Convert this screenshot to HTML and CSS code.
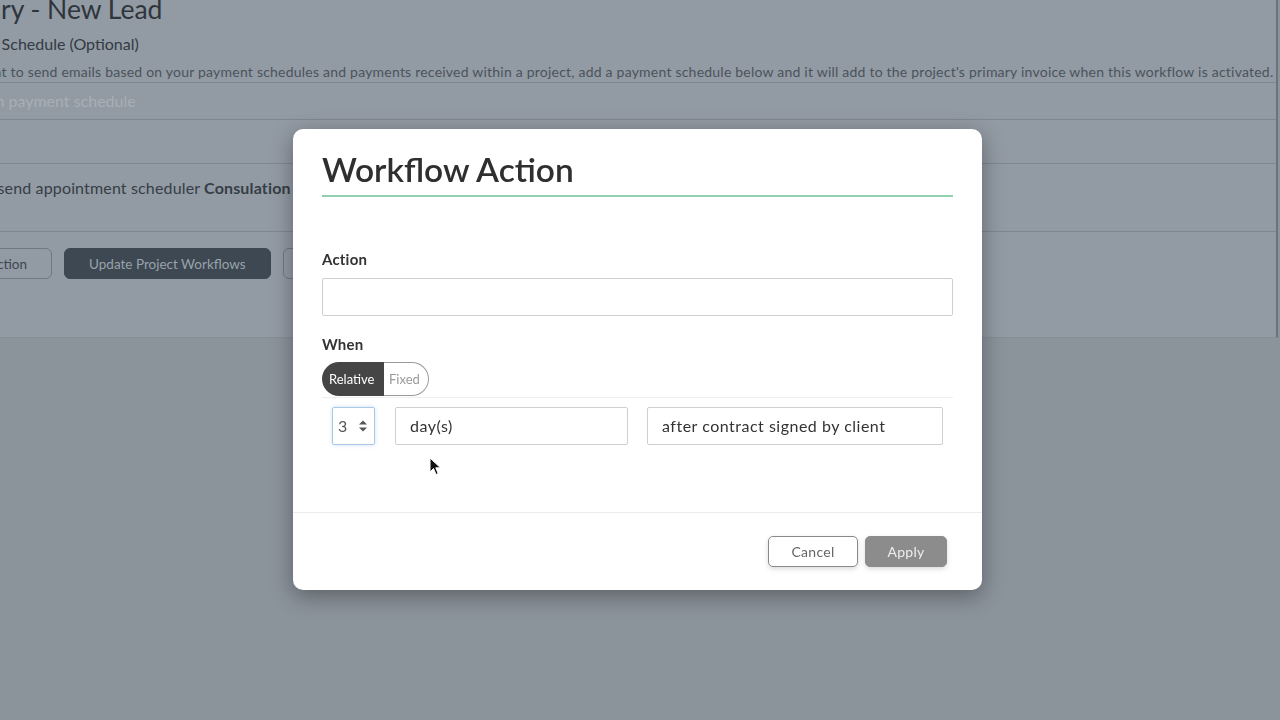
FILE: index.html
```html
<!DOCTYPE html>
<html lang="en">
<head>
    <meta charset="UTF-8">
    <meta name="viewport" content="width=device-width, initial-scale=1.0">
    <title>Workflow Action</title>
    <link rel="stylesheet" href="styles.css">
</head>
<body>
    <div class="page">
        <div class="card">
            <h1 class="page-title">Inquiry - New Lead</h1>
            <div class="schedule">
                <h2>Payment Schedule (Optional)</h2>
                <p class="hint">If you want to send emails based on your payment schedules and payments received within a project, add a payment schedule below and it will add to the project's primary invoice when this workflow is activated.</p>
                <div class="field">Add your own payment schedule</div>
            </div>
            <div class="step">Then send appointment scheduler <b>Consulation</b> to the client</div>
            <div class="actions">
                <button class="btn-ghost">Add Action</button>
                <button class="btn-dark">Update Project Workflows</button>
                <button class="btn-ghost">Save Workflow</button>
            </div>
        </div>
    </div>

    <div class="overlay">
        <div class="modal">
            <div class="modal-body">
                <h1 class="modal-title">Workflow Action</h1>

                <label class="label label-action">Action</label>
                <div class="input"></div>

                <label class="label label-when">When</label>
                <div class="toggle">
                    <span class="toggle-on">Relative</span>
                    <span class="toggle-off">Fixed</span>
                </div>
                <div class="when-row">
                    <div class="input number">
                        <span>3</span>
                        <svg class="spinner" width="10" height="14" viewBox="0 0 10 14">
                            <path d="M5 1.5 L9 5.5 H1 Z" fill="#555"/>
                            <path d="M5 12.5 L9 8.5 H1 Z" fill="#555"/>
                        </svg>
                    </div>
                    <div class="input unit">day(s)</div>
                    <div class="input trigger">after contract signed by client</div>
                </div>

                <svg class="cursor" width="14" height="20" viewBox="0 0 14 20">
                    <path d="M1 1 L1 15 L4.5 11.5 L7 17.5 L9.2 16.6 L6.8 10.8 L11.5 10.8 Z" fill="#111" stroke="#fff" stroke-width="1"/>
                </svg>
            </div>
            <div class="modal-footer">
                <button class="btn-cancel">Cancel</button>
                <button class="btn-apply">Apply</button>
            </div>
        </div>
    </div>
</body>
</html>
```

FILE: styles.css
```css
/* page behind the dialog, already dimmed */
body {
    margin: 0;
    font-family: Lato, "Noto Sans", sans-serif;
    background-color: #8b939b;
    height: 100vh;
    overflow: hidden;
}
.page {
    margin-left: -64px;
    width: 1342px;
}
.card {
    display: flow-root;
    background-color: #929aa3;
    height: 338px;
    border-bottom: 1px solid #858d95;
    border-right: 2px solid #6c737a;
    box-sizing: border-box;
}
.page-title {
    margin: -4px 0 0;
    text-indent: 7px;
    font-size: 26.5px;
    line-height: 26px;
    font-weight: 400;
    color: #2e353c;
    white-space: nowrap;
}
.schedule {
    border-bottom: 1px solid #7e868f;
    padding-bottom: 43px;
}
.schedule h2 {
    margin: 8px 0 0;
    font-size: 16px;
    line-height: 28px;
    font-weight: 400;
    color: #333b43;
}
.hint {
    margin: 3px 0 0;
    font-size: 14px;
    letter-spacing: 0.22px;
    line-height: 21px;
    color: #4b535b;
    white-space: nowrap;
}
.field {
    border-top: 1px solid #7e868f;
    border-bottom: 1px solid #7e868f;
    height: 36px;
    line-height: 36px;
    font-size: 16px;
    text-indent: -30px;
    color: #a9afb5;
    white-space: nowrap;
}
.step {
    height: 68px;
    box-sizing: border-box;
    padding-top: 14px;
    text-indent: 21px;
    line-height: 20px;
    font-size: 16px;
    letter-spacing: 0.15px;
    color: #363e46;
    border-bottom: 1px solid #7e868f;
    white-space: nowrap;
}
.actions {
    display: flex;
    gap: 12px;
    padding-top: 16px;
}
.actions button {
    height: 31px;
    font-family: inherit;
    font-size: 13.5px;
    border-radius: 6px;
    padding: 0 24px;
}
.btn-ghost {
    background: transparent;
    border: 1px solid #6f7780;
    color: #3e464e;
}
.btn-dark {
    background-color: #3d4852;
    border: 1px solid #3d4852;
    color: #99a2ab;
}

/* dialog */
.overlay {
    position: fixed;
    inset: 0;
    display: flex;
    align-items: center;
    justify-content: center;
    padding-right: 5px;
}
.modal {
    width: 689px;
    height: 461px;
    margin-top: -1px;
    background-color: #fff;
    border-radius: 10px;
    box-shadow: 0 6px 22px rgba(0, 0, 0, 0.35);
    display: flex;
    flex-direction: column;
}
.modal-body {
    position: relative;
    padding: 20px 29px 0;
    height: 384px;
    box-sizing: border-box;
    border-bottom: 1px solid #ececec;
    display: flex;
    flex-direction: column;
}
.modal-title {
    margin: 0;
    font-size: 33.5px;
    line-height: 40px;
    font-weight: 600;
    color: #2f2f2f;
    padding-bottom: 6px;
    border-bottom: 2px solid #92cfb1;
}
.label {
    font-size: 15px;
    line-height: 20px;
    font-weight: 700;
    color: #333;
    letter-spacing: 0.2px;
}
.label-action {
    margin-top: 52px;
    margin-bottom: 9px;
}
.label-when {
    margin-top: 18px;
    margin-bottom: 8px;
}
.input {
    height: 38px;
    box-sizing: border-box;
    border: 1px solid #cfcfcf;
    border-radius: 2px;
    font-size: 16px;
    letter-spacing: 0.5px;
    line-height: 36px;
    color: #333;
}
.toggle {
    display: flex;
    align-self: flex-start;
    height: 34px;
    font-size: 13px;
    line-height: 34px;
}
.toggle-on {
    background-color: #454545;
    color: #fff;
    padding: 0 7px;
    border-radius: 17px 0 0 17px;
    width: 48px;
}
.toggle-off {
    box-sizing: border-box;
    border: 1px solid #9a9a9a;
    border-left: none;
    border-radius: 0 17px 17px 0;
    color: #9a9a9a;
    line-height: 32px;
    padding: 0 5px;
    width: 45px;
}
.when-row {
    display: flex;
    gap: 20px;
    border-top: 1px solid #efefef;
    margin-top: 1px;
    padding: 9px 10px 0;
}
.number {
    width: 43px;
    flex: none;
    border-color: #a9c7e6;
    box-shadow: 0 0 4px rgba(120, 170, 220, 0.35);
    display: flex;
    align-items: center;
    padding-left: 5px;
    gap: 10px;
    color: #555;
}
.unit {
    width: 233px;
    padding-left: 14px;
}
.trigger {
    width: 296px;
    padding-left: 14px;
    margin-left: -1px;
}
.cursor {
    position: absolute;
    left: 136px;
    top: 328px;
}
.modal-footer {
    flex: 1;
    display: flex;
    align-items: center;
    justify-content: flex-end;
    gap: 7px;
    padding: 0 35px 0 0;
}
.modal-footer button {
    height: 31px;
    font-family: inherit;
    font-size: 14px;
    letter-spacing: 0.3px;
    border-radius: 5px;
    box-shadow: 0 2px 5px rgba(0, 0, 0, 0.15);
}
.btn-cancel {
    width: 90px;
    background-color: #fff;
    border: 1px solid #8a8a8a;
    color: #666;
}
.btn-apply {
    width: 82px;
    background-color: #8c8c8c;
    border: 1px solid #8c8c8c;
    color: #eee;
}
```
